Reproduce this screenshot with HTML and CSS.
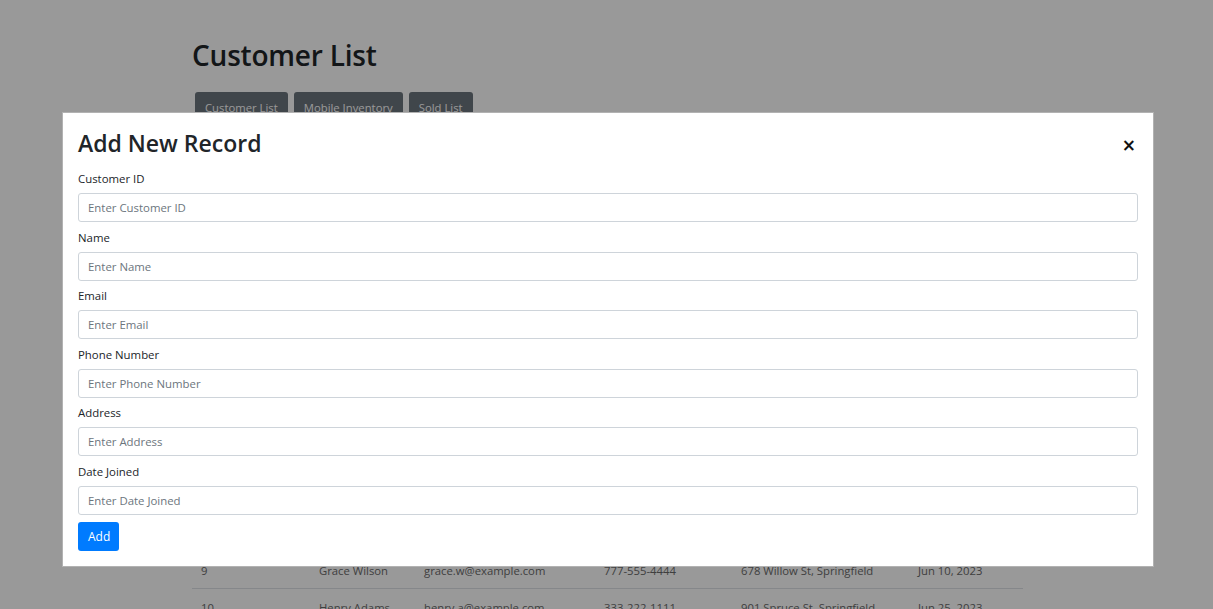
FILE: index.html
```html
<!DOCTYPE html>
<html lang="en">
<head>
<meta charset="utf-8">
<title>Customer List</title>
<link rel="stylesheet" href="styles.css">
</head>
<body>
<div class="page">
  <h1 class="page-title">Customer List</h1>
  <div class="tabs">
    <button class="btn btn-secondary">Customer List</button>
    <button class="btn btn-secondary">Mobile Inventory</button>
    <button class="btn btn-secondary">Sold List</button>
  </div>
  <div class="toolbar">
    <button class="btn btn-success">Add New</button>
  </div>
  <table class="table">
    <thead>
      <tr><th class="c-id">ID</th><th class="c-name">Name</th><th class="c-email">Email</th><th class="c-phone">Phone</th><th class="c-addr">Address</th><th class="c-date">Date Joined</th></tr>
    </thead>
    <tbody>
      <tr><td>1</td><td>John Doe</td><td>john.d@example.com</td><td>123-456-7890</td><td>123 Main St, Springfield</td><td>Jan 05, 2023</td></tr>
      <tr><td>2</td><td>Jane Smith</td><td>jane.s@example.com</td><td>234-567-8901</td><td>456 Oak St, Springfield</td><td>Jan 20, 2023</td></tr>
      <tr><td>3</td><td>Alice Brown</td><td>alice.b@example.com</td><td>345-678-9012</td><td>789 Pine St, Springfield</td><td>Feb 12, 2023</td></tr>
      <tr><td>4</td><td>Bob Johnson</td><td>bob.j@example.com</td><td>456-789-0123</td><td>321 Elm St, Springfield</td><td>Feb 28, 2023</td></tr>
      <tr><td>5</td><td>Carol White</td><td>carol.w@example.com</td><td>567-890-1234</td><td>654 Maple St, Springfield</td><td>Mar 15, 2023</td></tr>
      <tr><td>6</td><td>David Lee</td><td>david.l@example.com</td><td>678-901-2345</td><td>987 Cedar St, Springfield</td><td>Apr 02, 2023</td></tr>
      <tr><td>7</td><td>Emma Davis</td><td>emma.d@example.com</td><td>789-012-3456</td><td>135 Birch St, Springfield</td><td>Apr 18, 2023</td></tr>
      <tr><td>8</td><td>Frank Miller</td><td>frank.m@example.com</td><td>890-123-4567</td><td>246 Ash St, Springfield</td><td>May 22, 2023</td></tr>
      <tr><td>9</td><td>Grace Wilson</td><td>grace.w@example.com</td><td>777-555-4444</td><td>678 Willow St, Springfield</td><td>Jun 10, 2023</td></tr>
      <tr><td>10</td><td>Henry Adams</td><td>henry.a@example.com</td><td>333-222-1111</td><td>901 Spruce St, Springfield</td><td>Jun 25, 2023</td></tr>
    </tbody>
  </table>
</div>

<div class="backdrop"></div>

<div class="modal">
  <div class="modal-header">
    <h2 class="modal-title">Add New Record</h2>
    <button class="close" aria-label="Close">&times;</button>
  </div>
  <form class="modal-body">
    <div class="field">
      <label>Customer ID</label>
      <input type="text" placeholder="Enter Customer ID">
    </div>
    <div class="field">
      <label>Name</label>
      <input type="text" placeholder="Enter Name">
    </div>
    <div class="field">
      <label>Email</label>
      <input type="text" placeholder="Enter Email">
    </div>
    <div class="field">
      <label>Phone Number</label>
      <input type="text" placeholder="Enter Phone Number">
    </div>
    <div class="field">
      <label>Address</label>
      <input type="text" placeholder="Enter Address">
    </div>
    <div class="field">
      <label>Date Joined</label>
      <input type="text" placeholder="Enter Date Joined">
    </div>
    <button type="button" class="btn btn-primary">Add</button>
  </form>
</div>
</body>
</html>
```

FILE: styles.css
```css
* { box-sizing: border-box; }

html, body {
  margin: 0;
  height: 100%;
  overflow: hidden;
}

body {
  font-family: "Open Sans", "Noto Sans", "Liberation Sans", sans-serif;
  color: #212529;
  background: #fff;
}

.page {
  margin-left: 192px;
  width: 831px;
  padding-top: 36px;
}

.page-title {
  font-size: 28px;
  font-weight: 600;
  margin: 0 0 18px 0;
  line-height: 38px;
  letter-spacing: -0.2px;
}

.tabs {
  display: flex;
  gap: 6px;
  padding-left: 3px;
}

.btn {
  font-family: inherit;
  border: 1px solid transparent;
  border-radius: 3px;
  cursor: pointer;
}

.btn-secondary {
  background: #6c757d;
  color: #fff;
  font-size: 11.3px;
  padding: 6px 9px;
  line-height: 18px;
}

.toolbar {
  height: 94px;
  display: flex;
  align-items: center;
}

.btn-success {
  background: #28a745;
  color: #fff;
  font-size: 12px;
  padding: 6px 10px;
}

.table {
  width: 100%;
  border-collapse: collapse;
  font-size: 11.3px;
}

.table th, .table td {
  text-align: left;
  padding: 0 9px;
  height: 37px;
  border-top: 1px solid #dee2e6;
  font-weight: 400;
  color: #6a6a6a;
}

.table th { font-weight: 700; }

.c-id { width: 118px; }
.c-name { width: 105px; }
.c-email { width: 180px; }
.c-phone { width: 137px; }
.c-addr { width: 177px; }

.backdrop {
  position: fixed;
  inset: 0;
  background: rgba(0, 0, 0, 0.4);
}

.modal {
  position: absolute;
  left: 62px;
  top: 112px;
  width: 1092px;
  background: #fff;
  border: 1px solid rgba(0, 0, 0, 0.3);
  padding: 13px 15px 15px 15px;
}

.modal-header {
  display: flex;
  align-items: center;
  justify-content: space-between;
  margin-bottom: 11px;
}

.modal-title {
  margin: 0;
  font-size: 23px;
  font-weight: 600;
  line-height: 34px;
  color: #212529;
}

.close {
  background: none;
  border: 0;
  padding: 0;
  margin-right: 2px;
  margin-top: 4px;
  font-family: "DejaVu Sans", sans-serif;
  font-size: 17px;
  font-weight: 700;
  line-height: 1;
  color: #111;
  cursor: pointer;
}

.modal-body {
  display: flex;
  flex-direction: column;
  margin: 0;
}

.field {
  display: flex;
  flex-direction: column;
  margin-bottom: 7.5px;
}

.field label {
  font-size: 11.4px;
  line-height: 16px;
  margin-bottom: 6px;
  color: #212529;
}

.field input {
  height: 29px;
  border: 1px solid #ced4da;
  border-radius: 3px;
  padding: 0 9px;
  font-family: inherit;
  font-size: 11.4px;
  color: #495057;
}

.field input::placeholder {
  color: #6c757d;
}

.btn-primary {
  align-self: flex-start;
  background: #007bff;
  color: #fff;
  font-size: 12px;
  padding: 5px 9px;
  line-height: 16px;
  height: 29px;
  width: 41px;
}
```
